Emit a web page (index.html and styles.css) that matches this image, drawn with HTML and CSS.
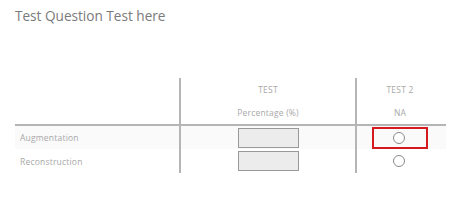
FILE: index.html
```html
<!DOCTYPE html>
<html lang="en">
  <head>
    <meta charset="UTF-8" />
    <title>Question</title>
    <link rel="stylesheet" href="styles.css">
  </head>
  <body>
    <div class="question">
      <h2 class="question-title">Test Question Test here</h2>
      <table class="grid">
        <thead>
          <tr>
            <th class="label-col"></th>
            <th class="mid-col">TEST</th>
            <th class="last-col">TEST 2</th>
          </tr>
          <tr class="sub-head">
            <th class="label-col"></th>
            <th class="mid-col">Percentage (%)</th>
            <th class="last-col">NA</th>
          </tr>
        </thead>
        <tbody>
          <tr class="odd">
            <td class="label-col">Augmentation</td>
            <td class="mid-col"><input class="pct-input" type="text"></td>
            <td class="last-col"><span class="radio-wrap selected"><span class="radio"></span></span></td>
          </tr>
          <tr>
            <td class="label-col">Reconstruction</td>
            <td class="mid-col"><input class="pct-input" type="text"></td>
            <td class="last-col"><span class="radio-wrap"><span class="radio"></span></span></td>
          </tr>
        </tbody>
      </table>
    </div>
  </body>
</html>
```

FILE: styles.css
```css
* {
  margin: 0;
  padding: 0;
  box-sizing: border-box;
}

body {
  font-family: "Open Sans", "Liberation Sans", sans-serif;
  background: #fff;
  color: #a8a8a8;
}

.question {
  padding: 6px 15px 0 15px;
}

.question-title {
  font-size: 13.6px;
  font-weight: 400;
  color: #7a7a7a;
  line-height: 20px;
  margin-bottom: 52px;
}

.grid {
  border-collapse: collapse;
  width: 431px;
  font-size: 8.5px;
  letter-spacing: 0.2px;
}

.grid th,
.grid td {
  font-weight: 400;
  height: 23px;
  padding: 0;
  text-align: center;
  vertical-align: middle;
}

.grid tbody td {
  height: 24px;
}

.label-col {
  width: 165px;
  text-align: left !important;
  padding-left: 5px !important;
  border-right: 2px solid #b5b5b5;
}

.mid-col {
  width: 176px;
  border-right: 2px solid #b5b5b5;
}

.last-col {
  padding-right: 3px !important;
}

.sub-head th {
  height: 24px;
  border-bottom: 2px solid #b5b5b5;
}

tbody tr.odd {
  background: #fafafa;
}

.pct-input {
  display: block;
  margin: 0 auto;
  width: 61px;
  height: 20px;
  border: 1.5px solid #999;
  background: #ececec;
}

.radio-wrap {
  display: inline-flex;
  align-items: center;
  justify-content: center;
  width: 56px;
  height: 22px;
  padding-right: 3px;
  vertical-align: middle;
  border: 2px solid transparent;
}

.radio-wrap.selected {
  border-color: #d51a1f;
}

.radio {
  display: block;
  width: 12px;
  height: 12px;
  border: 1px solid #8a8a8a;
  border-radius: 50%;
  background: #fff;
}
```
